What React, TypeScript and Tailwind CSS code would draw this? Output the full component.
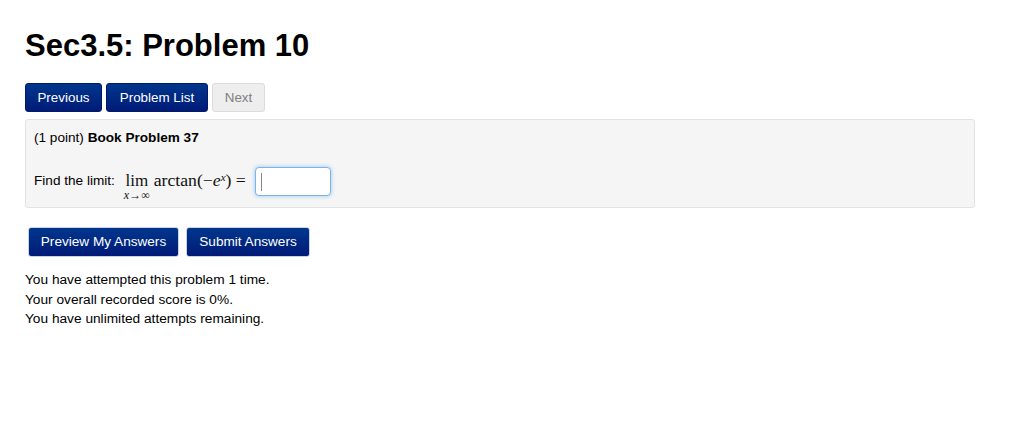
const navButton = "h-[29px] rounded-[3px] border border-[#001a66] bg-gradient-to-b from-[#00368c] to-[#001a78] text-white text-[13.4px] leading-none"
const submitButton = "h-[30px] shrink-0 whitespace-nowrap rounded-[3px] border border-[#c9d2e6] bg-gradient-to-b from-[#00368c] to-[#001a78] text-white text-[13.6px] leading-none"

export default function App() {
  return (
    <div className="min-h-[443px] bg-white px-[25px] pt-[24px] font-['Liberation_Sans',Arial,sans-serif] text-[13.7px] text-black">
      <h1 className="text-[31px] font-bold leading-[44px] text-black">Sec3.5: Problem 10</h1>

      <div className="mt-[15px] flex gap-1">
        <button className={`${navButton} w-[77px]`}>Previous</button>
        <button className={`${navButton} w-[102px]`}>Problem List</button>
        <button className="h-[29px] w-[53px] rounded-[3px] border border-[#dcdcdc] bg-[#eeeeee] text-[#808080] text-[13.4px] leading-none">Next</button>
      </div>

      <div className="mt-[7px] w-[950px] h-[89px] rounded-[3px] border border-[#e3e3e3] bg-[#f5f5f5] px-[8px] pt-[10px]">
        <p className="text-[13.6px] leading-[16px]">
          (1 point) <b>Book Problem 37</b>
        </p>
        <div className="mt-[21px] flex items-start">
          <span className="mt-[6px] text-[13.6px] leading-[16px]">Find the limit:</span>
          <span className="ml-[9px] flex flex-col items-center font-['Liberation_Serif',serif] text-[#111]">
            <span className="mt-[4px] text-[17px] leading-[19px]">lim</span>
            <span className="text-[12px] leading-[11px]"><i>x</i>→∞</span>
          </span>
          <span className="ml-[4px] mt-[4px] font-['Liberation_Serif',serif] text-[17.7px] leading-[19px] text-[#111] whitespace-pre">
            arctan(−<i>e</i><sup className="text-[11px] italic">x</sup>) =
          </span>
          <div className="ml-[9px] flex h-[29px] w-[76px] items-center rounded-[4px] border border-[#7fb2e8] bg-white pl-[5px] shadow-[0_0_4px_rgba(82,168,236,0.6)]">
            <div className="h-[18px] w-px bg-[#888]" />
          </div>
        </div>
      </div>

      <div className="mt-[19px] ml-[3px] flex gap-[7px]">
        <button className={`${submitButton} w-[151px]`}>Preview My Answers</button>
        <button className={`${submitButton} w-[124px]`}>Submit Answers</button>
      </div>

      <div className="mt-[13px] leading-[19.5px]">
        <p>You have attempted this problem 1 time.</p>
        <p>Your overall recorded score is 0%.</p>
        <p>You have unlimited attempts remaining.</p>
      </div>
    </div>
  )
}
